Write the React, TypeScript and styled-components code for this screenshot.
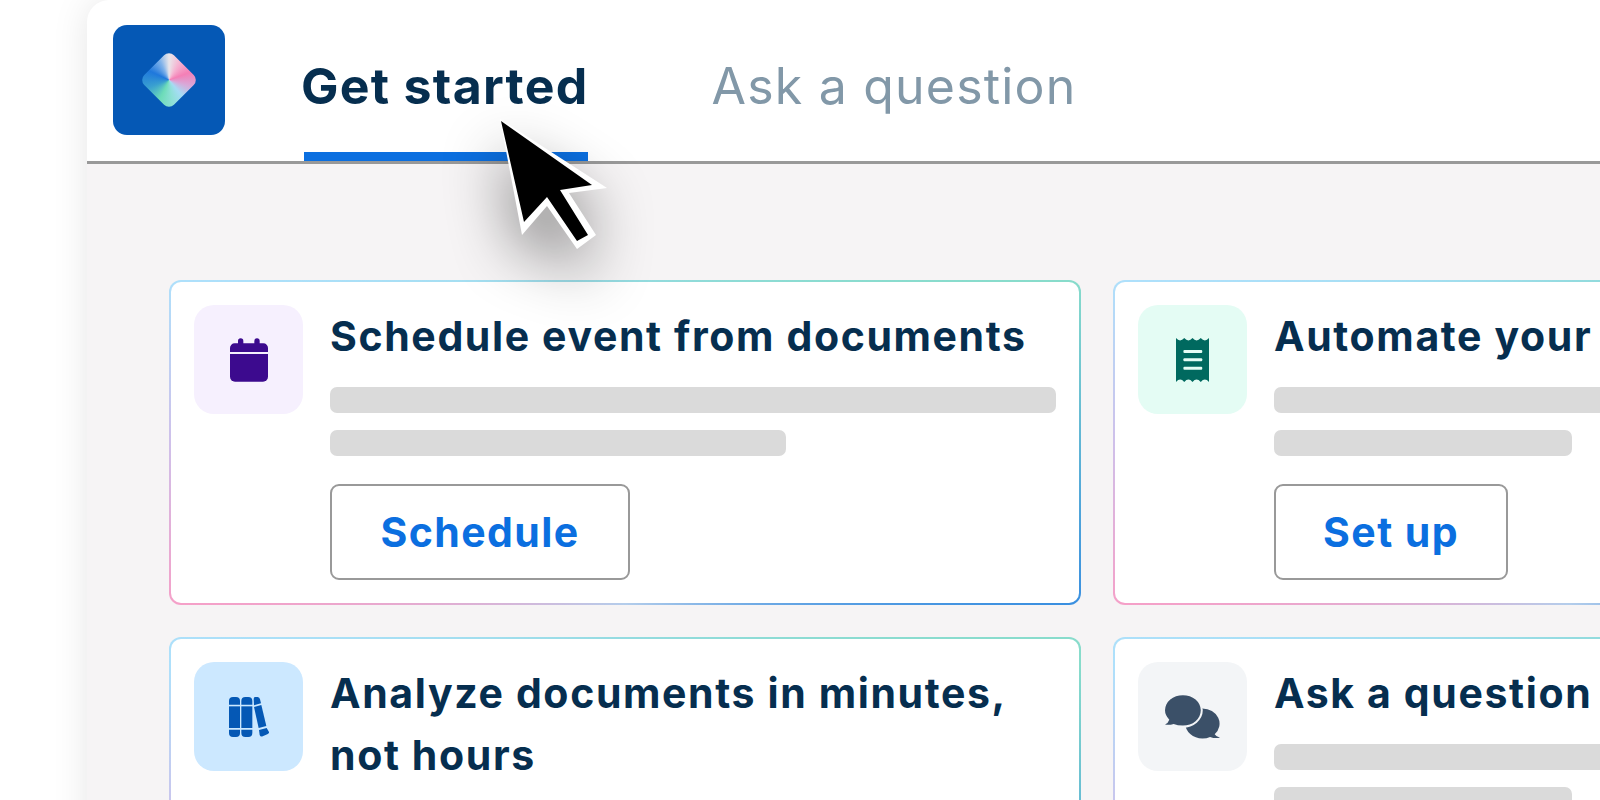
import styled, { createGlobalStyle } from 'styled-components'

const GlobalStyle = createGlobalStyle`
  html, body {
    margin: 0;
    height: 800px;
    overflow: hidden;
    background: #fff;
    font-family: Inter, "Liberation Sans", sans-serif;
  }
`

const Page = styled.div`
  position: relative;
  width: 1600px;
  height: 800px;
  overflow: hidden;
  padding-left: 87px;
  box-sizing: border-box;
`

const Frame = styled.div`
  width: 2100px;
  height: 1000px;
  background: #f6f4f5;
  border-top-left-radius: 22px;
  box-shadow: 0 0 36px rgba(0, 0, 0, 0.1);
`

const Header = styled.header`
  display: flex;
  align-items: stretch;
  height: 161px;
  padding-left: 26px;
  background: #fff;
  border-bottom: 3px solid #999;
  border-top-left-radius: 22px;
`

const Logo = styled.div`
  display: flex;
  align-items: center;
  justify-content: center;
  width: 112px;
  height: 110px;
  margin-top: 25px;
  border-radius: 14px;
  background: #0558b5;
`

const LogoMark = styled.div`
  width: 42px;
  height: 42px;
  border-radius: 7px;
  transform: rotate(45deg);
  background: conic-gradient(
    from -45deg,
    #e8e6ea 0deg,
    #f5b5d2 30deg,
    #f47fb6 70deg,
    #d9a8d8 105deg,
    #a6dcf5 140deg,
    #8fe0d8 170deg,
    #6ddcb8 205deg,
    #3aa0d0 250deg,
    #1f78dc 295deg,
    #7fb2ea 335deg,
    #e8e6ea 360deg
  );
`

const Tabs = styled.nav`
  display: flex;
  margin-left: 79px;
  gap: 126px;
`

const Tab = styled.div<{ $active?: boolean }>`
  position: relative;
  padding-top: 55px;
  font-size: 50px;
  line-height: 62px;
  letter-spacing: ${p => (p.$active ? '1.27px' : '1.2px')};
  text-indent: -3px;
  white-space: nowrap;
  font-weight: ${p => (p.$active ? 700 : 400)};
  color: ${p => (p.$active ? '#062e4f' : '#8298a8')};
  border-bottom: 9px solid ${p => (p.$active ? '#0b6fe0' : 'transparent')};
`

const Grid = styled.main`
  display: grid;
  grid-template-columns: 912px 912px;
  gap: 32px;
  padding: 116px 0 0 82px;
`

const Card = styled.section`
  display: flex;
  align-items: flex-start;
  gap: 27px;
  padding: 23px;
  border: 2px solid transparent;
  border-radius: 12px;
  background:
    linear-gradient(#fff, #fff) padding-box,
    conic-gradient(
      #94dbe0 0deg,
      #88dccb 70deg,
      #3a8fe0 110deg,
      #b4cdeb 180deg,
      #f5a0c8 250deg,
      #cfc0ea 270deg,
      #aee0fb 290deg,
      #94dbe0 360deg
    ) border-box;
`

const IconBox = styled.div<{ $bg: string }>`
  display: flex;
  flex: none;
  align-items: center;
  justify-content: center;
  width: 109px;
  height: 109px;
  border-radius: 20px;
  background: ${p => p.$bg};
`

const CardBody = styled.div`
  flex: 1;
  min-width: 0;
`

const CardTitle = styled.h3`
  margin: 0 0 20px;
  font-size: 41px;
  line-height: 62px;
  letter-spacing: 1.62px;
  font-weight: 700;
  color: #062e4f;
`

const Bar = styled.div<{ $width?: string }>`
  width: ${p => p.$width ?? '100%'};
  height: 26px;
  margin-bottom: 17px;
  border-radius: 7px;
  background: #dadada;
`

const ActionButton = styled.button<{ $width: number }>`
  display: block;
  width: ${p => p.$width}px;
  height: 96px;
  margin-top: 28px;
  border: 2px solid #999;
  border-radius: 9px;
  background: #fff;
  font-family: inherit;
  font-size: 41px;
  letter-spacing: 1.4px;
  font-weight: 700;
  color: #0b6fe0;
`

const Pointer = styled.svg`
  position: absolute;
  left: 490px;
  top: 110px;
  overflow: visible;
  filter: drop-shadow(0 28px 30px rgba(0, 0, 0, 0.45));
`

const CalendarIcon = () => (
  <svg width="38" height="44" viewBox="148 142 114 130" fill="#3c0a8e">
    <path d="M148 183v-12a14 14 0 0 1 14-14h10v-7a8 8 0 0 1 16 0v7h33v-7a8 8 0 0 1 16 0v7h11a14 14 0 0 1 14 14v12z" />
    <path d="M148 189h114v68a15 15 0 0 1-15 15h-84a15 15 0 0 1-15-15z" />
  </svg>
)

const ReceiptIcon = () => (
  <svg width="33" height="44" viewBox="165 142 98 130">
    <path
      fill="#00695f"
      d="M165 142Q177 156 189.5 142Q202 156 214 142Q226 156 238.500 142Q251 156 263 142V272Q251 258 238.500 272Q226 258 214 272Q202 258 189.500 272Q177 258 165 272z"
    />
    <g fill="#e4fcf4">
      <rect x="187" y="177" width="56" height="9" rx="3" />
      <rect x="187" y="202" width="56" height="9" rx="3" />
      <rect x="187" y="227" width="56" height="9" rx="3" />
    </g>
  </svg>
)

const BookSpine = ({ x }: { x: number }) => (
  <g transform={`translate(${x} 0)`}>
    <path d="M142 158v-11a12 12 0 0 1 12-12h9a12 12 0 0 1 12 12v11z" />
    <rect x="142" y="163" width="33" height="65" />
    <path d="M142 233h33v10a12 12 0 0 1-12 12h-9a12 12 0 0 1-12-12z" />
  </g>
)

const BooksIcon = () => (
  <svg width="40" height="40" viewBox="142 135 120 120" fill="#0558b5">
    <BookSpine x={0} />
    <BookSpine x={37} />
    <path d="M216 141a7 7 0 0 1 9-6h3a9 9 0 0 1 7 7l3 12-21 6z" />
    <path d="M217 165L239 159L254 222L231 228z" />
    <path d="M232 234L255 228L262 240Q263 245 257 247L243 253Q236 255 234 249z" />
  </svg>
)

const ChatIcon = () => (
  <svg width="55" height="44" viewBox="132 133 166 132" fill="#3b5068">
    <path d="M245 173a52 46 0 0 1 37 78q4 7 16 11q-17 2-30-3q-10 5-23 5a52 46 0 0 1 0-92z" />
    <path
      stroke="#f3f5f7"
      strokeWidth="12"
      paintOrder="stroke"
      d="M186 133a54 46 0 0 1 0 92q-16 0-28-5q-12 4-26 2q9-4 13-15q-13-13-13-28a54 46 0 0 1 54-46z"
    />
  </svg>
)

const cards = [
  {
    title: 'Schedule event from documents',
    bg: '#f6f0fe',
    icon: <CalendarIcon />,
    second: '456px',
    action: 'Schedule',
    actionWidth: 300,
  },
  {
    title: 'Automate your expense reports',
    bg: '#e4fcf4',
    icon: <ReceiptIcon />,
    second: '298px',
    action: 'Set up',
    actionWidth: 234,
  },
  {
    title: 'Analyze documents in minutes, not hours',
    bg: '#cce8ff',
    icon: <BooksIcon />,
    second: '456px',
    action: 'Analyze',
    actionWidth: 300,
  },
  {
    title: 'Ask a question',
    bg: '#f3f5f7',
    icon: <ChatIcon />,
    second: '298px',
    action: 'Ask',
    actionWidth: 234,
  },
]

export default function App() {
  return (
    <Page>
      <GlobalStyle />
      <Frame>
        <Header>
          <Logo>
            <LogoMark />
          </Logo>
          <Tabs>
            <Tab $active>Get started</Tab>
            <Tab>Ask a question</Tab>
          </Tabs>
        </Header>
        <Grid>
          {cards.map(card => (
            <Card key={card.title}>
              <IconBox $bg={card.bg}>{card.icon}</IconBox>
              <CardBody>
                <CardTitle>{card.title}</CardTitle>
                <Bar />
                <Bar $width={card.second} />
                <ActionButton $width={card.actionWidth}>{card.action}</ActionButton>
              </CardBody>
            </Card>
          ))}
        </Grid>
      </Frame>
      <Pointer width="117" height="140" viewBox="490 110 117 140">
        <polygon fill="#fff" points="500,119 607,188 569,193 596,235 577,249 547,206 522,235" />
        <polygon fill="#000" points="501,121 592,185 560,190 588,235 577,241 547,197 524,222" />
      </Pointer>
    </Page>
  )
}
